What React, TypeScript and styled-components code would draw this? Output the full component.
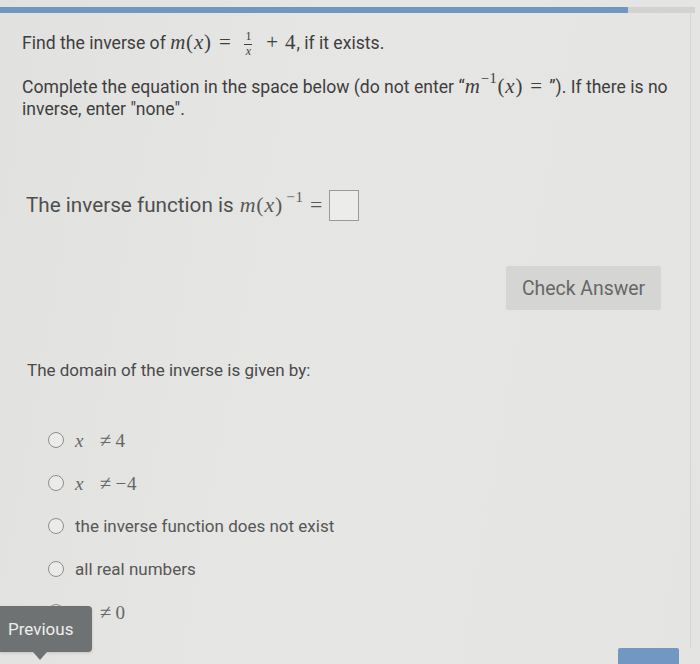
import React from "react"
import styled, { createGlobalStyle } from "styled-components"

const GlobalStyle = createGlobalStyle`
  html, body {
    margin: 0;
    padding: 0;
    background: #e3e3e1;
  }
  body {
    font-family: Roboto, "Liberation Sans", Arial, sans-serif;
  }
`

const Page = styled.div`
  position: relative;
  width: 700px;
  height: 664px;
  overflow: hidden;
  background: linear-gradient(100deg, #e1e1df 0%, #e6e6e4 45%, #e4e4e2 100%);
  display: flex;
  flex-direction: column;
`

const Track = styled.div`
  margin-top: 7px;
  width: 695px;
  height: 6px;
  background: #d2d2d0;
`

const TrackFill = styled.div`
  height: 100%;
  background: #6f97c2;
`

const Content = styled.main`
  flex: 1;
  padding: 0 20px 0 22px;
  border-right: 1px solid #d6d6d4;
  margin-right: 9px;
`

const Question = styled.p<{ $top: number }>`
  margin: ${props => props.$top}px 0 0;
  font-size: 17.6px;
  line-height: 22px;
  color: #3e3e3e;
`

const serif = `"Liberation Serif", "DejaVu Serif", serif`

const MVar = styled.i`
  font-family: ${serif};
  font-style: italic;
  font-size: 1.19em;
  letter-spacing: 0.04em;
`

const MUp = styled.span`
  font-family: ${serif};
  font-style: normal;
  font-size: 1.19em;
  letter-spacing: 0.04em;
`

const MOp = styled.span<{ $tight?: boolean }>`
  font-family: ${serif};
  font-size: 1.19em;
  margin: 0 ${props => (props.$tight ? "0.28em" : "0.34em")};
`

const Frac = styled.span`
  display: inline-flex;
  flex-direction: column;
  justify-content: center;
  align-items: center;
  height: 10px;
  vertical-align: middle;
  font-family: ${serif};
  font-size: 0.68em;
  line-height: 1;
  margin: 0 0.55em;
`

const FracTop = styled.span`
  padding: 0 1px 1px;
  border-bottom: 1px solid currentColor;
`

const FracBottom = styled.i`
  padding-top: 1px;
`

const Sup = styled.sup<{ $gap?: number }>`
  font-family: ${serif};
  font-size: 0.82em;
  line-height: 0;
  vertical-align: 0.68em;
  margin-left: ${props => props.$gap ?? 1}px;
  letter-spacing: 0.05em;
`

const AnswerRow = styled.div`
  margin-top: 69px;
  margin-left: 4px;
  display: flex;
  align-items: center;
  font-size: 20.7px;
  color: #4f4f4f;
  height: 32px;
`

const AnswerLabel = styled.span`
  margin-right: 6px;
`

const AnswerMath = styled.span`
  color: #5a5a5a;
  font-size: 18.4px;
`

const AnswerBox = styled.span`
  display: inline-block;
  width: 28px;
  height: 29px;
  margin-left: 1px;
  border: 1px solid #9a9a9a;
  background: #ececea;
`

const Actions = styled.div`
  margin-top: 45px;
  margin-right: 9px;
  display: flex;
  justify-content: flex-end;
`

const CheckButton = styled.button`
  width: 155px;
  height: 44px;
  border: none;
  border-radius: 2px;
  background: #d5d5d3;
  color: #676767;
  font-family: Roboto, "Liberation Sans", Arial, sans-serif;
  font-size: 19.4px;
`

const DomainLabel = styled.p`
  margin: 50px 0 0 5px;
  font-size: 17px;
  line-height: 20px;
  color: #4a4a4a;
`

const Options = styled.ul`
  list-style: none;
  margin: 48px 0 0 26px;
  padding: 0;
  display: flex;
  flex-direction: column;
  gap: 19px;
`

const Option = styled.li`
  display: flex;
  align-items: center;
  gap: 11px;
  height: 24px;
  font-size: 17px;
  color: #575757;
`

const Radio = styled.span`
  width: 14px;
  height: 14px;
  border: 1.5px solid #8e8e8e;
  border-radius: 50%;
  background: #ebebe9;
  flex-shrink: 0;
`

const OptionMath = styled.span`
  color: #666;
  font-size: 16px;
`

const NotEqual = styled.span`
  font-family: ${serif};
  font-size: 1.3em;
  margin: 0 0.2em 0 0.75em;
`

const Footer = styled.footer`
  display: flex;
  justify-content: flex-end;
  padding-right: 21px;
  height: 16px;
  overflow: hidden;
`

const NextButton = styled.span`
  width: 61px;
  height: 40px;
  background: #7397c3;
  border-radius: 2px;
`

const Tooltip = styled.div`
  position: absolute;
  left: 0;
  top: 606px;
  width: 92px;
  height: 46px;
  box-sizing: border-box;
  padding-left: 8px;
  display: flex;
  align-items: center;
  background: #6f7273;
  border-radius: 0 4px 4px 0;
  color: #eeeeec;
  font-size: 17px;
  box-shadow: 0 1px 3px rgba(0, 0, 0, 0.15);

  &::after {
    content: "";
    position: absolute;
    left: 33px;
    bottom: -8px;
    border-left: 7px solid transparent;
    border-right: 7px solid transparent;
    border-top: 8px solid #6f7273;
  }
`

const choices = [
  { key: "a", math: true, text: "4" },
  { key: "b", math: true, text: "\u22124" },
  { key: "c", math: false, text: "the inverse function does not exist" },
  { key: "d", math: false, text: "all real numbers" },
  { key: "e", math: true, text: "0" },
]

const progress = 628 / 695

export default function App() {
  return (
    <Page>
      <GlobalStyle />
      <Track>
        <TrackFill style={{ width: `${progress * 100}%` }} />
      </Track>
      <Content>
        <Question $top={18}>
          Find the inverse of <MVar>m</MVar>
          <MUp>(</MUp>
          <MVar>x</MVar>
          <MUp>)</MUp>
          <MOp>=</MOp>
          <Frac>
            <FracTop>1</FracTop>
            <FracBottom>x</FracBottom>
          </Frac>
          <MOp>+</MOp>
          <MUp>4</MUp>, if it exists.
        </Question>
        <Question $top={21}>
          Complete the equation in the space below (do not enter “<MVar>m</MVar>
          <Sup $gap={0}>−1</Sup>
          <MUp>(</MUp>
          <MVar>x</MVar>
          <MUp>)</MUp>
          <MOp>=</MOp>”). If there is no inverse, enter "none".
        </Question>

        <AnswerRow>
          <AnswerLabel>The inverse function is</AnswerLabel>
          <AnswerMath>
            <MVar>m</MVar>
            <MUp>(</MUp>
            <MVar>x</MVar>
            <MUp>)</MUp>
            <Sup $gap={3}>−1</Sup>
            <MOp $tight>=</MOp>
          </AnswerMath>
          <AnswerBox />
        </AnswerRow>

        <Actions>
          <CheckButton>Check Answer</CheckButton>
        </Actions>

        <DomainLabel>The domain of the inverse is given by:</DomainLabel>

        <Options>
          {choices.map(choice => (
            <Option key={choice.key}>
              <Radio />
              {choice.math ? (
                <OptionMath>
                  <MVar>x</MVar>
                  <NotEqual>≠</NotEqual>
                  <MUp>{choice.text}</MUp>
                </OptionMath>
              ) : (
                choice.text
              )}
            </Option>
          ))}
        </Options>
      </Content>
      <Footer>
        <NextButton />
      </Footer>
      <Tooltip>Previous</Tooltip>
    </Page>
  )
}
